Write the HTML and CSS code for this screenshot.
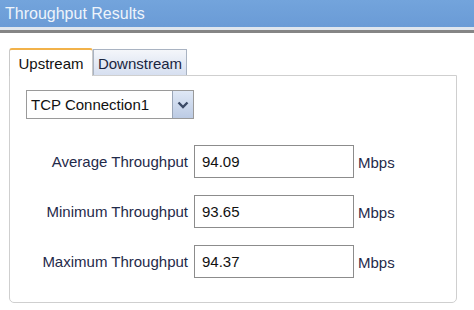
FILE: index.html
```html
<!DOCTYPE html>
<html lang="en">

<head>
    <meta charset="UTF-8">
    <title>Throughput Results</title>
    <link rel="stylesheet" href="styles.css">
</head>

<body>
    <!-- Window title -->
    <div class="titlebar">Throughput Results</div>
    <div class="titlebar-rule"></div>

    <!-- Tabs -->
    <div class="tabs">
        <div class="tab tab-active">Upstream</div>
        <div class="tab">Downstream</div>
    </div>

    <!-- Tab content -->
    <div class="panel">
        <div class="select">
            <span class="select-text">TCP Connection1</span>
            <span class="select-btn">
                <svg width="12" height="8" viewBox="0 0 12 8">
                    <path d="M1.5 1.5 L6 6 L10.5 1.5" fill="none" stroke="#3b4a66" stroke-width="2.4"/>
                </svg>
            </span>
        </div>

        <div class="results">
            <label class="res-label">Average Throughput</label>
            <div class="res-value">94.09</div>
            <span class="res-unit">Mbps</span>

            <label class="res-label">Minimum Throughput</label>
            <div class="res-value">93.65</div>
            <span class="res-unit">Mbps</span>

            <label class="res-label">Maximum Throughput</label>
            <div class="res-value">94.37</div>
            <span class="res-unit">Mbps</span>
        </div>
    </div>
</body>

</html>
```

FILE: styles.css
```css
/* Page */
body {
    margin: 0;
    padding: 0;
    background-color: #fff;
    font-family: "Liberation Sans", Arial, sans-serif;
    font-size: 15px;
    color: #1f2a4a;
}

/* Title bar */
.titlebar {
    height: 27px;
    line-height: 27px;
    padding-left: 5px;
    background: linear-gradient(#73a4dc, #6a9bd6);
    color: #eef4fb;
    font-size: 16px;
}

.titlebar-rule {
    height: 3px;
    background-color: #dfe6ee;
    border-bottom: 3px solid #858585;
}

/* Tabs */
.tabs {
    display: flex;
    align-items: flex-end;
    margin-top: 14px;
    padding-left: 9px;
}

.tab {
    height: 25px;
    line-height: 27px;
    width: 92px;
    text-align: center;
    border: 1px solid #a9b3c2;
    border-bottom: none;
    background: linear-gradient(#f4f6fa, #d6dff0);
    color: #1a2540;
    font-size: 15px;
}

.tab-active {
    height: 26px;
    width: 82px;
    border-color: #c9c9c9;
    border-top: 2px solid #f2b24a;
    border-radius: 3px 3px 0 0;
    background: #fff;
    color: #111;
    position: relative;
    top: 1px;
}

/* Panel */
.panel {
    margin: 0 17px 0 9px;
    height: 212px;
    padding: 14px 0 0 16px;
    border: 1px solid #cfcfcf;
    border-radius: 0 0 5px 5px;
}

/* Dropdown */
.select {
    display: flex;
    width: 166px;
    height: 27px;
    border: 1px solid #9a9a9a;
}

.select-text {
    flex: 1;
    padding-left: 4px;
    line-height: 28px;
    color: #111;
}

.select-btn {
    width: 20px;
    display: flex;
    align-items: center;
    justify-content: center;
    border-left: 1px solid #9aa6b8;
    background: linear-gradient(#dfe8f6, #bccbe4);
}

/* Result rows */
.results {
    display: grid;
    grid-template-columns: 180px 160px auto;
    column-gap: 4px;
    row-gap: 17px;
    align-items: center;
    margin-top: 26px;
    margin-left: -16px;
}

.res-label {
    text-align: right;
    padding-right: 2px;
    color: #1f2a4a;
}

.res-value {
    height: 31px;
    line-height: 31px;
    padding-left: 7px;
    border: 1px solid #8c8c8c;
    color: #111;
}

.res-unit {
    color: #1f2a4a;
    padding-top: 2px;
}
```
